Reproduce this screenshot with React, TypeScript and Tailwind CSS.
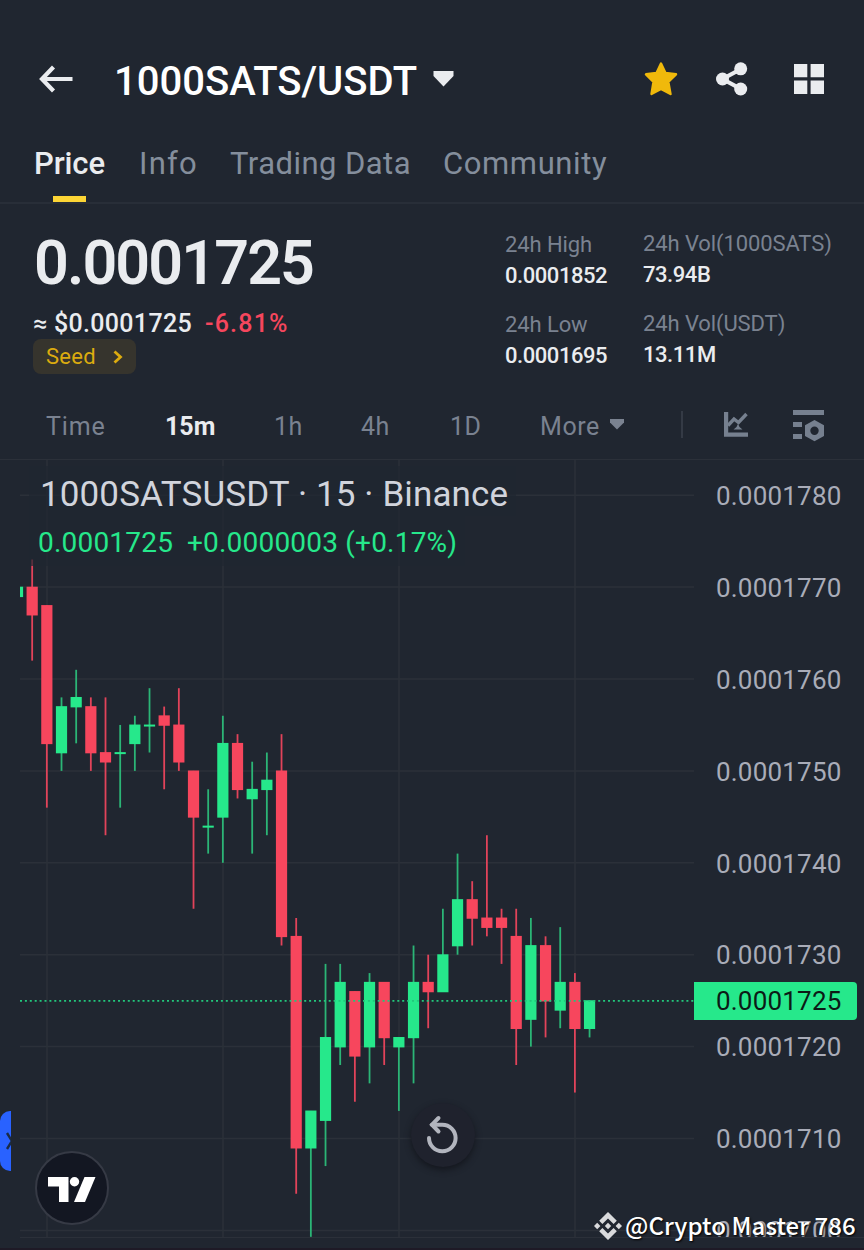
import { useState } from 'react';

type Candle = [open: number, close: number, high: number, low: number];

const TABS = [
  { name: 'Price', className: 'ml-[34px] w-[105px] font-medium tracking-[-0.1px]' },
  { name: 'Info', className: 'w-[91px] tracking-[1.2px]' },
  { name: 'Trading Data', className: 'w-[213px] tracking-[0.45px]' },
  { name: 'Community', className: 'tracking-[0.6px]' },
];

const INTERVALS = [
  { name: 'Time', className: 'w-[119px] tracking-[0.9px]' },
  { name: '15m', className: 'w-[109px]' },
  { name: '1h', className: 'w-[87px] tracking-[0.5px]' },
  { name: '4h', className: 'w-[89px] tracking-[0.5px]' },
  { name: '1D', className: 'w-[90px] tracking-[0.5px]' },
];

const STATS = [
  {
    className: 'w-[138px] pt-px',
    items: [
      { label: '24h High', value: '0.0001852' },
      { label: '24h Low', value: '0.0001695' },
    ],
  },
  {
    className: '',
    items: [
      { label: '24h Vol(1000SATS)', value: '73.94B' },
      { label: '24h Vol(USDT)', value: '13.11M' },
    ],
  },
];

const AXIS = [1780, 1770, 1760, 1750, 1740, 1730, 1720, 1710, 1700];

// prices in units of 0.0000001
const CANDLES: Candle[] = [
  [1769, 1770, 1770, 1769],
  [1770, 1767, 1773, 1762],
  [1768, 1753, 1768, 1746],
  [1752, 1757, 1758, 1750],
  [1757, 1758, 1761, 1753],
  [1757, 1752, 1758, 1750],
  [1752, 1751, 1758, 1743],
  [1752, 1752, 1755, 1746],
  [1753, 1755, 1756, 1750],
  [1755, 1755, 1759, 1752],
  [1756, 1755, 1757, 1748],
  [1755, 1751, 1759, 1750],
  [1750, 1745, 1750, 1735],
  [1744, 1744, 1748, 1741],
  [1745, 1753, 1756, 1740],
  [1753, 1748, 1754, 1747],
  [1747, 1748, 1751, 1741],
  [1748, 1749, 1752, 1743],
  [1750, 1732, 1754, 1731],
  [1732, 1709, 1734, 1704],
  [1709, 1713, 1713, 1699.3],
  [1712, 1721, 1729, 1707],
  [1720, 1727, 1729, 1718],
  [1726, 1719, 1726, 1714],
  [1720, 1727, 1728, 1716],
  [1727, 1721, 1727, 1718],
  [1720, 1721, 1721, 1713],
  [1721, 1727, 1731, 1716],
  [1727, 1726, 1730, 1722],
  [1726, 1730, 1735, 1726],
  [1731, 1736, 1741, 1730],
  [1736, 1734, 1738, 1731],
  [1734, 1733, 1743, 1732],
  [1734, 1733, 1735, 1729],
  [1732, 1722, 1735, 1718],
  [1723, 1731, 1734, 1720],
  [1731, 1725, 1732, 1721],
  [1724, 1727, 1733, 1722],
  [1727, 1722, 1728, 1715],
  [1722, 1725, 1725, 1721],
];

const toX = (i: number) => 17.5 + i * 14.668;
const toY = (price: number) => 36.2 + (1780 - price) * 9.19;

function CandleChart() {
  return (
    <svg className="block" width="694" height="790" viewBox="0 0 694 790">
      <defs>
        <clipPath id="plot">
          <rect x="20" y="0" width="674" height="790" />
        </clipPath>
      </defs>
      <g stroke="#2b3039" strokeWidth="1.5">
        {AXIS.map((p) => (
          <path key={p} d={`M20 ${toY(p)}H694`} />
        ))}
        {[47, 223, 399, 575].map((x) => (
          <path key={x} d={`M${x} 0V778`} />
        ))}
      </g>
      <g clipPath="url(#plot)">
        {CANDLES.map(([open, close, high, low], i) => {
          const color = close >= open ? '#26e88b' : '#f7465d';
          const wick = close >= open ? '#2bb576' : '#e2435a';
          const top = toY(Math.max(open, close));
          const height = Math.abs(open - close) * 9.19;
          return (
            <g key={i}>
              <path d={`M${toX(i)} ${toY(high)}V${toY(low)}`} stroke={wick} strokeWidth="1.8" />
              <rect x={toX(i) - 5.6} y={top - 0.4} width="11.2" height={height ? height + 1.2 : 2} fill={color} />
            </g>
          );
        })}
      </g>
      <path d="M20 541.9H694" stroke="#22c77c" strokeWidth="1.8" strokeDasharray="2 2.9" />
    </svg>
  );
}

function BinanceMark() {
  return (
    <svg width="28" height="28" viewBox="0 0 28 28" fill="#d9dadc">
      <path d="M14 0L22.8 8.8L19.6 12L14 6.4L8.4 12L5.2 8.8Z" />
      <path d="M14 28L22.8 19.2L19.6 16L14 21.6L8.4 16L5.2 19.2Z" />
      <path d="M14 10.8L17.2 14L14 17.2L10.8 14Z" />
      <path d="M3.2 10.8L6.4 14L3.2 17.2L0 14Z" />
      <path d="M24.8 10.8L28 14L24.8 17.2L21.6 14Z" />
    </svg>
  );
}

export default function App() {
  const [tab, setTab] = useState('Price');
  const [interval, setInterval] = useState('15m');

  return (
    <div className="flex h-[1250px] w-[864px] flex-col overflow-hidden bg-[#202630] font-[Roboto,sans-serif] text-[#eaecef]">
      {/* Header */}
      <header className="flex h-[124px] shrink-0 items-center pt-[34px] pl-[39px]">
        <svg width="34" height="28" viewBox="0 0 34 28" fill="none" stroke="#eaecef" strokeWidth="4.2">
          <path d="M33.5 14H4M14.5 2L3 14L14.5 26" />
        </svg>
        <h1 className="ml-[41px] w-[303px] pt-[5px] text-[40px] leading-none font-medium whitespace-nowrap text-white">
          1000SATS/USDT
        </h1>
        <svg className="ml-[16px]" width="21" height="16" viewBox="0 0 21 16" fill="#eaecef">
          <path d="M.5 0H20.5V5L10.5 15.5L.5 5Z" />
        </svg>
        <svg className="ml-[190px]" width="34" height="34" viewBox="0 0 34 34">
          <path
            d="M17 1.5L21.5 11L32 12.3L24.3 19.8L26.5 32L17 27L7.5 32L9.5 19.8L2 12.3L12.5 11Z"
            fill="#f0b90b"
            stroke="#f0b90b"
            strokeWidth="2.4"
            strokeLinejoin="round"
          />
        </svg>
        <svg className="ml-[38px]" width="32" height="34" viewBox="0 0 32 34" fill="#eaecef">
          <path d="M25 7L6.5 17L25 27" fill="none" stroke="#eaecef" strokeWidth="4.2" />
          <circle cx="24.7" cy="6.8" r="6.5" />
          <circle cx="6.5" cy="17" r="6.5" />
          <circle cx="24.7" cy="27" r="6.5" />
        </svg>
        <svg className="ml-[46px]" width="30" height="30" viewBox="0 0 30 30" fill="#eaecef">
          <path d="M0 0H13.3V13.3H0ZM16.6 0H30V13.3H16.6ZM0 16.6H13.3V30H0ZM16.6 16.6H30V30H16.6Z" />
        </svg>
      </header>

      {/* Tabs */}
      <nav className="flex h-[80px] shrink-0 border-b-2 border-[#282e38] pt-[22px]">
        {TABS.map((t) => (
          <button
            key={t.name}
            onClick={() => setTab(t.name)}
            className={`flex flex-col items-start text-left text-[31px] leading-[36px] whitespace-nowrap ${t.className} ${
              tab === t.name ? 'text-[#eaecef]' : 'text-[#848e9c]'
            }`}
          >
            {t.name}
            {tab === t.name && <span className="mt-[14px] ml-[19px] h-[7px] w-[33px] bg-[#fcd535]" />}
          </button>
        ))}
      </nav>

      {/* Price summary */}
      <section className="flex h-[188px] shrink-0">
        <div className="w-[505px] pl-[33px]">
          <div className="pt-[29px] pl-px text-[61px] leading-[60px] font-semibold tracking-[-1.9px]">0.0001725</div>
          <div className="mt-[17px] flex text-[25px] leading-[28px] font-medium whitespace-nowrap">
            <span className="w-[172px] tracking-[0.3px]">≈ $0.0001725</span>
            <span className="tracking-[1.2px] text-[#f6465d]">-6.81%</span>
          </div>
          <button className="mt-px flex h-[35px] w-[103px] items-center rounded-lg bg-[#36342d] pl-[13px] text-[22px] text-[#dcab0f]">
            <span className="w-[67px] text-left tracking-[0.3px]">Seed</span>
            <svg width="10" height="14" viewBox="0 0 10 14" fill="none" stroke="#dcab0f" strokeWidth="2.8">
              <path d="M1.5 1.5L7.5 7L1.5 12.5" />
            </svg>
          </button>
        </div>
        {STATS.map((col, i) => (
          <div key={i} className={col.className}>
            {col.items.map((s) => (
              <div key={s.label} className="h-[80px] pt-[26px] whitespace-nowrap">
                <div className="text-[22px] leading-[28px] tracking-[-0.1px] text-[#7a8290]">{s.label}</div>
                <div className="mt-[3px] text-[22px] leading-[28px] font-medium tracking-[-0.45px]">{s.value}</div>
              </div>
            ))}
          </div>
        ))}
      </section>

      {/* Intervals */}
      <nav className="flex h-[67px] shrink-0 items-center pl-[46px] text-[25px]">
        {INTERVALS.map((t) => (
          <button
            key={t.name}
            onClick={() => setInterval(t.name)}
            className={`pt-[3px] text-left ${t.className} ${interval === t.name ? 'font-bold text-[#eaecef]' : 'text-[#7a8290]'}`}
          >
            {t.name}
          </button>
        ))}
        <button className="flex w-[141px] items-center pt-[3px] text-[#7a8290]">
          <span className="w-[70px] text-left tracking-[0.6px]">More</span>
          <svg className="mb-[5px]" width="14" height="11" viewBox="0 0 14 11" fill="#7a8290">
            <path d="M0 0H14V3.5L7 10.5L0 3.5Z" />
          </svg>
        </button>
        <span className="mb-[2px] h-[27px] w-[2px] bg-[#343a45]" />
        <svg className="mb-[3px] ml-[41px]" width="24" height="25" viewBox="0 0 24 25" fill="none" stroke="#76808f" strokeWidth="4.2">
          <path d="M2.1 0V22.7H24" />
          <path d="M4 13.5L10 7L14.5 10.5L22.5 2" strokeWidth="3.4" />
          <path d="M9.5 17.5H18.5L15.5 15L14 11.8L12.5 15Z" fill="#76808f" stroke="none" />
        </svg>
        <svg className="ml-[45px]" width="32" height="32" viewBox="0 0 32 32" fill="#76808f">
          <path d="M0 0H31V5H0ZM0 12H9V17H0ZM0 24H9V29H0Z" />
          <path
            fillRule="evenodd"
            d="M21.5 10L31 15.3V26L21.5 31.3L12 26V15.3ZM21.5 16.5A4.2 4.2 0 1 0 21.5 24.9A4.2 4.2 0 1 0 21.5 16.5Z"
          />
        </svg>
      </nav>

      {/* Chart */}
      <main className="relative flex h-[791px] shrink-0">
        <CandleChart />
        <div className="h-[778px] w-[170px] overflow-hidden pl-[22px] text-[26px] tracking-[0.2px] text-[#a9acb8]">
          {AXIS.map((p) => (
            <div key={p} className="h-[91.9px] pt-[17px] leading-[40px]">
              0.000{p}
            </div>
          ))}
        </div>

        <span className="absolute top-0 left-0 h-px w-full bg-[#2b3039]" />
        <span className="absolute top-[778px] right-0 left-[20px] h-px bg-[#2b3039]" />
        <span className="absolute top-[789px] left-0 h-[2px] w-full bg-[#1e1a26]" />

        {/* Legend */}
        <div className="absolute top-[7px] left-[29px] bg-[#202630]/70 pt-[10px] pr-[8px] pb-[2px] pl-[11px] text-[35px] leading-[38px] tracking-[0.12px] whitespace-nowrap text-[#d1d4dc]">
          1000SATSUSDT · 15 · Binance
        </div>
        <div className="absolute top-[57px] left-[29px] flex bg-[#202630]/70 pt-[11px] pr-[8px] pb-[7px] pl-[9px] text-[28px] leading-[32px] tracking-[0.2px] whitespace-nowrap text-[#26e88b]">
          <span className="w-[149px]">0.0001725</span>
          <span>+0.0000003 (+0.17%)</span>
        </div>

        <div className="absolute top-[523px] left-[694px] h-[38px] w-[163px] rounded-r-[4px] bg-[#26e88b] pl-[22px] text-[26px] leading-[39px] tracking-[0.2px] text-[#0c1a16]">
          0.0001725
        </div>

        <button className="absolute top-[644px] left-[411px] flex size-[64px] items-center justify-center rounded-full bg-[#1f222d] shadow-[0_3px_6px_#14171e]">
          <svg className="mr-[2px]" width="34" height="40" viewBox="0 0 34 40" fill="none" stroke="#b2b5be" strokeWidth="4" strokeLinecap="round">
            <path d="M4 23A13.3 13.3 0 1 0 17.3 9.7H7" />
            <path d="M13.5 3L7 9.7L13.5 16.5" />
          </svg>
        </button>

        <div className="absolute top-[652px] left-0 h-[60px] w-[11px] overflow-hidden rounded-l-[10px] bg-[#2962ff]">
          <svg width="11" height="60" viewBox="0 0 11 60" fill="none" stroke="#1a2b45" strokeWidth="2.4">
            <path d="M7 22L12 30L7 38" />
          </svg>
        </div>

        <div className="absolute top-[692px] left-[35px] flex size-[74px] items-center justify-center rounded-full border-2 border-[#363a45] bg-[#131722]">
          <svg className="mt-[2px]" width="48" height="25" viewBox="0 0 48 25" fill="#fff">
            <path d="M0 0H20.5V25H11V9.5H0Z" />
            <circle cx="26.5" cy="4.7" r="4.7" />
            <path d="M36.5 0H47.5L37 25H26Z" />
          </svg>
        </div>

        <div className="absolute top-[750px] left-[594px] flex items-center whitespace-nowrap">
          <BinanceMark />
          <span className="mb-[2px] ml-[3px] font-['Noto_Sans_CJK_SC',sans-serif] text-[24px] leading-[32px] font-medium tracking-[0.06px] text-white [text-shadow:1px_1px_2px_#000]">
            @Crypto Master 786
          </span>
        </div>
      </main>
    </div>
  );
}
